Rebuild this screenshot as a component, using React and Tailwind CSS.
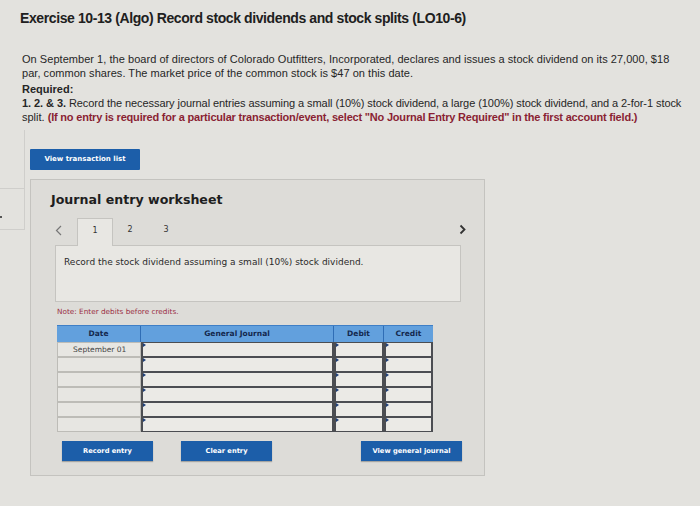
import React from "react";

const sans = { fontFamily: '"Liberation Sans", Arial, sans-serif' };
const ver = { fontFamily: '"DejaVu Sans", Verdana, sans-serif' };

function Flag() {
  return (
    <span className="absolute left-0 top-0 w-0 h-0 border-t-[2px] border-t-transparent border-b-[2px] border-b-transparent border-l-[3px] border-l-[#1f3f77]" />
  );
}

function InputCell({ w }) {
  return (
    <div className={`relative ${w} h-full border-x-[2px] border-y-[1.5px] border-[#4b4d52] bg-[#ebeae6]`}>
      <Flag />
    </div>
  );
}

function Row({ date }) {
  return (
    <div className="flex h-[15px]">
      <div
        className="w-[84px] h-full border border-[#bdbcb7] bg-[#e7e6e2] text-[7.5px] text-[#444] flex items-center pl-[15px]"
        style={ver}
      >
        {date}
      </div>
      <InputCell w="w-[193px]" />
      <InputCell w="w-[50px]" />
      <InputCell w="w-[49px]" />
    </div>
  );
}

function Btn({ children, w }) {
  return (
    <div
      className={`${w} h-[20px] bg-[#1c5ea9] text-white text-[6.7px] font-bold flex items-center justify-center shadow-[0_1px_1px_rgba(0,0,0,0.25)]`}
      style={ver}
    >
      {children}
    </div>
  );
}

export default function App() {
  return (
    <div className="w-[700px] h-[506px] bg-[#e3e2de] overflow-hidden text-[#262626]" style={sans}>
      <div className="pl-[20px] pt-[8px] h-[28px] text-[14px] leading-[20px] font-bold tracking-[-0.4px] text-[#202020] whitespace-nowrap">
        Exercise 10-13 (Algo) Record stock dividends and stock splits (LO10-6)
      </div>
      <div className="pl-[22px] mt-[25px] text-[11px] leading-[13.5px] tracking-[0.04px] whitespace-nowrap">
        On September 1, the board of directors of Colorado Outfitters, Incorporated, declares and issues a stock dividend on its 27,000, $18
        <br />
        par, common shares. The market price of the common stock is $47 on this date.
      </div>
      <div className="pl-[22px] mt-[2px] text-[11px] leading-[14px] whitespace-nowrap">
        <div className="font-bold">Required:</div>
        <div className="tracking-[-0.07px]">
          <span className="font-bold">1. 2. &amp; 3.</span> Record the necessary journal entries assuming a small (10%) stock dividend, a large (100%) stock dividend, and a 2-for-1 stock
        </div>
        <div>
          split. <span className="font-bold text-[#8a1f33] tracking-[-0.2px]">(If no entry is required for a particular transaction/event, select "No Journal Entry Required" in the first account field.)</span>
        </div>
      </div>

      <div className="flex mt-[6px]">
        <div className="w-[25px] shrink-0 flex flex-col">
          <div className="h-[58px] border-r border-[#cfcecb]" />
          <div className="h-[42px] border-r border-y border-[#cfcecb] relative">
            <div className="absolute left-0 top-[27px] w-[2px] h-[2px] bg-[#555]" />
          </div>
        </div>
        <div className="ml-[5px] pt-[19px]">
          <div
            className="w-[110px] h-[21px] bg-[#1c5ea9] text-white text-[7px] font-bold flex items-center justify-center rounded-[1px]"
            style={ver}
          >
            View transaction list
          </div>

          <div className="mt-[9px] w-[455px] h-[297px] border border-[#c4c3bf] bg-[#dddcd8]">
            <div className="pl-[20px] pt-[11px] text-[12.6px] leading-[18px] font-bold text-[#1e1e1e]" style={ver}>
              Journal entry worksheet
            </div>
            <div className="ml-[24px] mt-[9px] w-[415px] flex items-end h-[27px] text-[8px] text-[#333]" style={ver}>
              <div className="w-[22px] h-full flex items-center pl-[0px] pb-[3px]">
                <svg width="7" height="11" viewBox="0 0 7 11">
                  <path d="M6 1 L1.5 5.5 L6 10" fill="none" stroke="#777" strokeWidth="1.2" />
                </svg>
              </div>
              <div className="w-[36px] h-[28px] -mb-px border border-b-0 border-[#c5c4c0] bg-[#e8e7e3] flex items-center justify-center z-10 pb-[4px]">
                1
              </div>
              <div className="w-[34px] h-full flex items-center justify-center pb-[4px]">2</div>
              <div className="w-[38px] h-full flex items-center justify-center pb-[4px]">3</div>
              <div className="flex-1" />
              <div className="h-full flex items-center pb-[4px] pr-[4px]">
                <svg width="7" height="11" viewBox="0 0 7 11">
                  <path d="M1.5 1.5 L5.5 5.5 L1.5 9.5" fill="none" stroke="#333" strokeWidth="1.8" />
                </svg>
              </div>
            </div>
            <div className="ml-[24px] w-[406px] h-[57px] border border-[#c5c4c0] bg-[#e8e7e3] pl-[8px] pt-[10px] text-[9px] text-[#2a2a2a]" style={ver}>
              Record the stock dividend assuming a small (10%) stock dividend.
            </div>
            <div className="ml-[26px] mt-[5px] text-[7.3px] leading-[10px] text-[#9a3045]" style={ver}>
              Note: Enter debits before credits.
            </div>
            <div className="ml-[26px] mt-[8px] w-[376px]">
              <div className="flex h-[17px] bg-[#62a0dd] border-t border-[#3f7fc6] text-[7.5px] font-bold text-[#14284d]" style={ver}>
                <div className="w-[84px] flex items-center justify-center border-r border-[#2f6db5]">Date</div>
                <div className="w-[193px] flex items-center justify-center border-r border-[#2f6db5]">General Journal</div>
                <div className="w-[50px] flex items-center justify-center border-r border-[#2f6db5]">Debit</div>
                <div className="w-[49px] flex items-center justify-center">Credit</div>
              </div>
              <Row date="September 01" />
              <Row />
              <Row />
              <Row />
              <Row />
              <Row />
            </div>
            <div className="ml-[31px] mt-[9px] flex">
              <Btn w="w-[91px]">Record entry</Btn>
              <div className="w-[28px]" />
              <Btn w="w-[91px]">Clear entry</Btn>
              <div className="w-[89px]" />
              <Btn w="w-[101px]">View general journal</Btn>
            </div>
          </div>
        </div>
      </div>
    </div>
  );
}
